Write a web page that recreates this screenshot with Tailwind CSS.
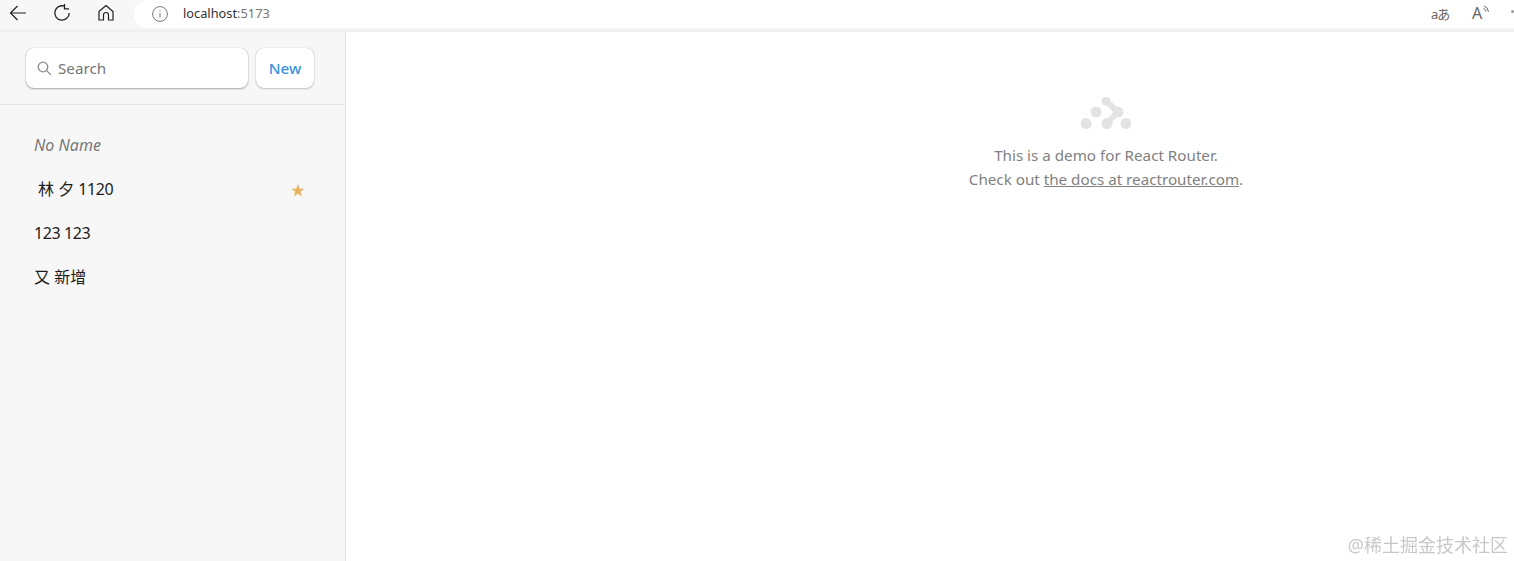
<!DOCTYPE html>
<html lang="en">
<head>
  <meta charset="UTF-8" />
  <title>React Router Contacts</title>
  <script src="https://cdn.jsdelivr.net/npm/@tailwindcss/browser@4"></script>
</head>
<body class="h-[561px] w-[1514px] overflow-hidden bg-white font-['Noto_Sans','Noto_Sans_CJK_SC',sans-serif] text-[#1c1c1c] flex flex-col">

  <!-- browser toolbar -->
  <div class="h-[32px] shrink-0 flex bg-[#f7f7f7] border-b-[3px] border-[#f0f0f0]">
    <div class="w-[134px] shrink-0 relative text-[#222]">
      <svg class="absolute left-[9px] top-[4px] w-[18px] h-[18px]" viewBox="0 0 18 18" fill="none" stroke="currentColor" stroke-width="1.2"><path d="M17 9H1.5M8.5 2 1.5 9l7 7"/></svg>
      <svg class="absolute left-[53px] top-[4px] w-[18px] h-[18px]" viewBox="0 0 18 18" fill="none" stroke="currentColor" stroke-width="1.3"><path d="M11.5 2.2A7.2 7.2 0 1 0 16.2 9"/><path d="M11.5 0v4.8h4.6"/></svg>
      <svg class="absolute left-[97px] top-[4px] w-[18px] h-[18px]" viewBox="0 0 18 18" fill="none" stroke="currentColor" stroke-width="1.2" stroke-linejoin="round"><path d="M2 7.5 9 1.5l7 6V16h-4.5v-5a2.5 2.5 0 0 0-5 0v5H2z"/></svg>
    </div>
    <div class="flex-1 bg-white rounded-l-[14px] h-[28px] flex items-center pl-[18px] relative">
      <svg class="w-[16px] h-[16px] text-[#777]" viewBox="0 0 16 16" fill="none" stroke="currentColor" stroke-width="1"><circle cx="8" cy="8" r="7.4"/><path d="M8 7v4.5M8 4.2v1.2"/></svg>
      <span class="ml-[15px] text-[12.8px] text-[#333]">localhost<span class="text-[#777]">:5173</span></span>
      <span class="absolute left-[1297px] top-[4px] text-[13px] leading-[20px] tracking-[-1px] text-[#666]">aあ</span>
      <span class="absolute left-[1338px] top-[2px] text-[16px] leading-[22px] text-[#666]">A</span>
      <svg class="absolute left-[1349px] top-[5px] w-[7px] h-[9px] text-[#666]" viewBox="0 0 7 9" fill="none" stroke="currentColor" stroke-width="1"><path d="M1 .8q4 1.5 4.5 6M.5 3.5Q2.5 4 3 6.5"/></svg>
      <span class="absolute left-[1377px] top-[10px] w-[3px] h-[3px] rounded-full bg-[#999]"></span>
    </div>
  </div>

  <div class="flex flex-1 min-h-0">
    <!-- sidebar -->
    <aside class="w-[346px] shrink-0 bg-[#f7f7f7] border-r border-[#e3e3e3] flex flex-col">
      <div class="h-[73px] shrink-0 border-b border-[#e3e3e3] flex items-start gap-[8px] pl-[26px] pt-[16px]">
        <div class="w-[222px] h-[40px] bg-white rounded-[8px] shadow-[0_0_1px_rgba(0,0,0,0.3),0_1px_2px_rgba(0,0,0,0.3)] flex items-center pl-[11px]">
          <svg class="w-[15px] h-[15px] text-[#8a8a8a]" viewBox="0 0 15 15" fill="none" stroke="currentColor" stroke-width="1.3"><circle cx="6" cy="6" r="4.8"/><path d="m9.6 9.6 4.2 4.2"/></svg>
          <span class="ml-[6px] text-[15.2px] text-[#757575]">Search</span>
        </div>
        <div class="w-[58px] h-[40px] bg-white rounded-[8px] shadow-[0_0_1px_rgba(0,0,0,0.3),0_1px_2px_rgba(0,0,0,0.2)] flex items-center justify-center text-[15.2px] font-medium text-[#3992e1]">New</div>
      </div>
      <nav class="pt-[18px] pl-[34px] pr-[40px] text-[16px]">
        <div class="h-[44px] flex items-center italic text-[#777]">No Name</div>
        <div class="h-[44px] flex items-center justify-between pl-[4px]"><span>林 夕 <span class="tracking-[-0.4px]">1120</span></span><span class="text-[14px] text-[#e6b35c]">★</span></div>
        <div class="h-[44px] flex items-center tracking-[-0.4px]">123 123</div>
        <div class="h-[44px] flex items-center">又 新增</div>
      </nav>
    </aside>

    <!-- detail pane -->
    <main class="flex-1 relative flex flex-col items-center pt-[65px] pl-[352px] text-[15.2px] leading-[24px] text-[#818181]">
      <svg class="w-[50px] h-[32px] blur-[0.6px]" viewBox="0 0 50 32" fill="#e3e3e3">
        <circle cx="25" cy="4" r="4.5"/><circle cx="15" cy="15" r="5.5"/><circle cx="37" cy="15" r="5.5"/>
        <circle cx="5" cy="26.5" r="5.5"/><circle cx="26" cy="26.5" r="5.5"/><circle cx="45" cy="26.5" r="5.5"/>
        <path d="M25 4 37 15 26 26" fill="none" stroke="#e3e3e3" stroke-width="6"/>
      </svg>
      <p class="mt-[14px]">This is a demo for React Router.</p>
      <p>Check out <span class="underline">the docs at reactrouter.com</span>.</p>
      <span class="absolute right-[6px] bottom-[4px] text-[18px] leading-[24px] text-[#c8c8c8] blur-[0.3px]">@稀土掘金技术社区</span>
    </main>
  </div>
</body>
</html>
